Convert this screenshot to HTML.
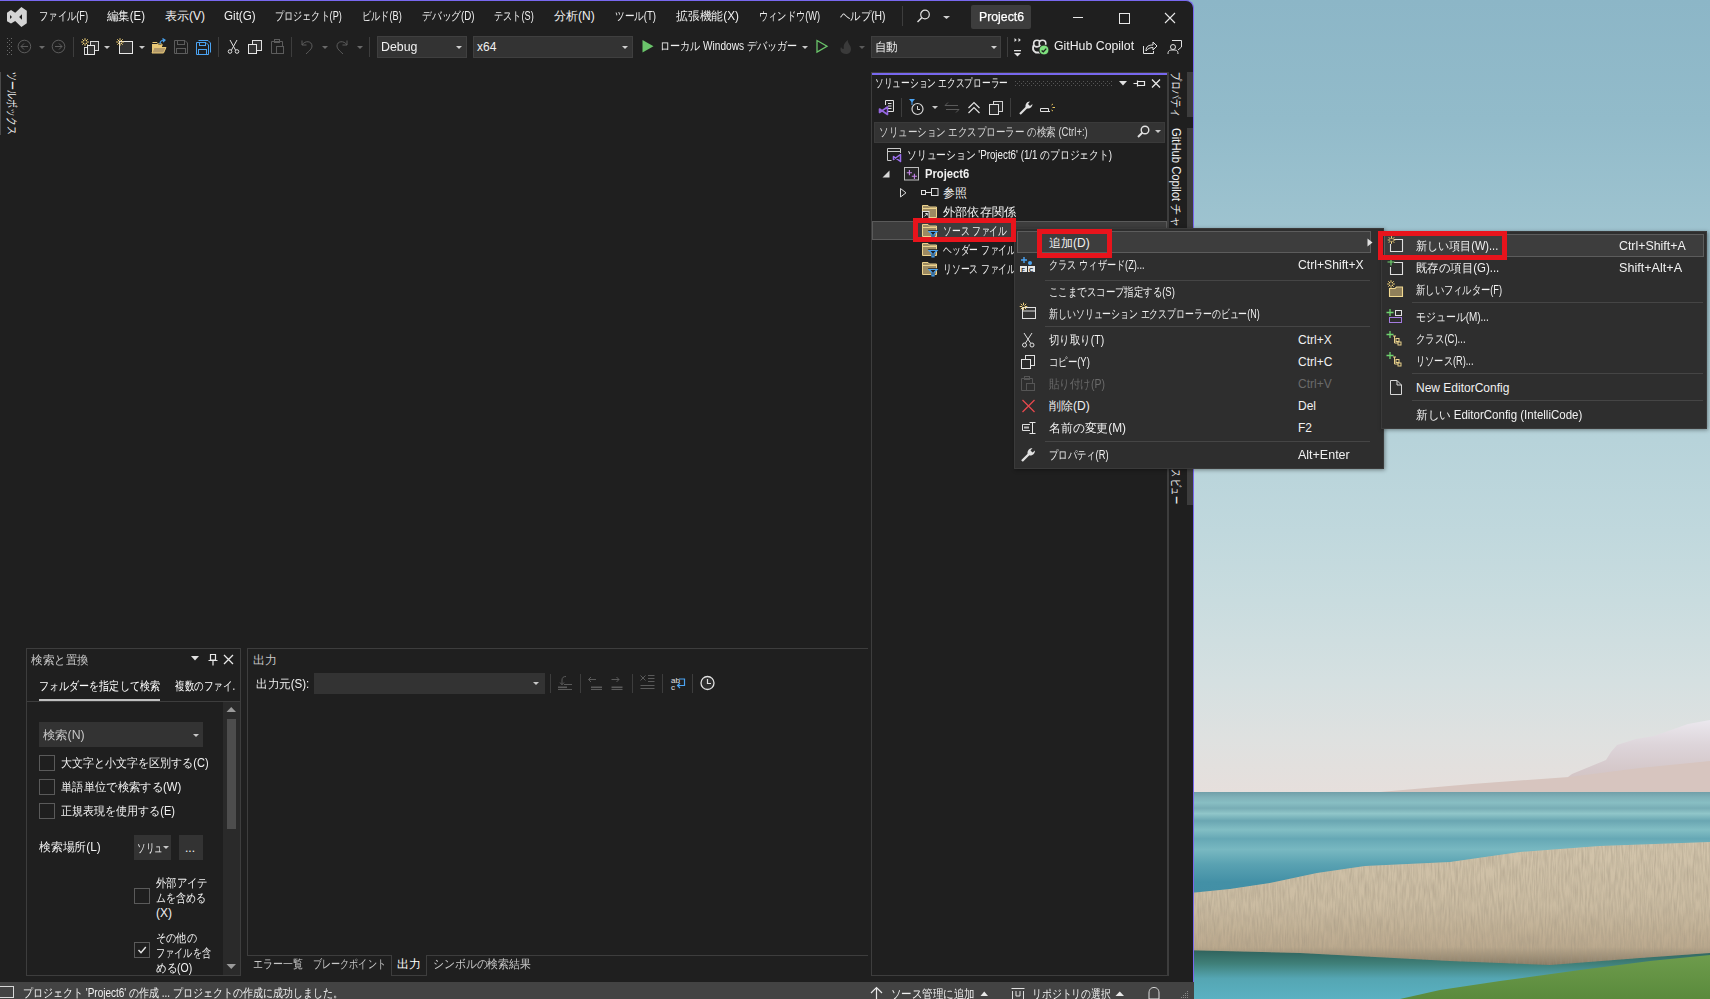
<!DOCTYPE html><html><head><meta charset="utf-8"><style>*{box-sizing:border-box;margin:0;padding:0}
html,body{width:1710px;height:999px;overflow:hidden}
body{position:relative;font-family:"Liberation Sans",sans-serif;font-size:12px;color:#f1f1f1;background:#1f1f1f}
.a{position:absolute}
svg.a{overflow:visible}
.t{position:absolute;white-space:nowrap;line-height:14px;transform-origin:0 0}
</style></head><body>
<svg class="a" style="left:1180px;top:0" width="530" height="999" viewBox="0 0 530 999">
<defs>
<linearGradient id="sky" x1="0" y1="0" x2="0" y2="792" gradientUnits="userSpaceOnUse">
<stop offset="0" stop-color="#8cb6c7"/><stop offset="0.15" stop-color="#92bbca"/><stop offset="0.3" stop-color="#9fc4d0"/><stop offset="0.45" stop-color="#add0d8"/>
<stop offset="0.556" stop-color="#b7d3da"/><stop offset="0.67" stop-color="#c0d8dd"/><stop offset="0.758" stop-color="#c9dcdf"/><stop offset="0.859" stop-color="#d5e0e1"/><stop offset="0.934" stop-color="#dfe1e0"/><stop offset="1" stop-color="#e6dfdc"/></linearGradient>
<linearGradient id="wat" x1="0" y1="792" x2="0" y2="972" gradientUnits="userSpaceOnUse">
<stop offset="0" stop-color="#709fa8"/><stop offset="0.03" stop-color="#80b2b9"/><stop offset="0.06" stop-color="#88bec3"/>
<stop offset="0.09" stop-color="#78adb5"/><stop offset="0.12" stop-color="#90c6c9"/><stop offset="0.16" stop-color="#6aa6b2"/>
<stop offset="0.21" stop-color="#82bec4"/><stop offset="0.26" stop-color="#66a8b5"/><stop offset="0.32" stop-color="#78b8c1"/>
<stop offset="0.4" stop-color="#5aa2b2"/><stop offset="0.5" stop-color="#4390a6"/><stop offset="1" stop-color="#3f8aa0"/></linearGradient>
<linearGradient id="gr" x1="0" y1="845" x2="0" y2="965" gradientUnits="userSpaceOnUse">
<stop offset="0" stop-color="#d2c4ab"/><stop offset="0.5" stop-color="#cbbca2"/><stop offset="0.85" stop-color="#bba98e"/><stop offset="1" stop-color="#8a7c66"/></linearGradient>
<linearGradient id="wat2" x1="0" y1="948" x2="0" y2="999" gradientUnits="userSpaceOnUse">
<stop offset="0" stop-color="#2d5e58"/><stop offset="0.3" stop-color="#3f7f78"/><stop offset="0.6" stop-color="#55a6b3"/><stop offset="1" stop-color="#5ab1c2"/></linearGradient>
<linearGradient id="mt" x1="0" y1="720" x2="0" y2="790" gradientUnits="userSpaceOnUse">
<stop offset="0" stop-color="#ebe8ee"/><stop offset="0.35" stop-color="#ddd5da"/><stop offset="0.7" stop-color="#d5c8ca"/><stop offset="1" stop-color="#d3c2bf"/></linearGradient>
<linearGradient id="gg" x1="0" y1="955" x2="0" y2="999" gradientUnits="userSpaceOnUse">
<stop offset="0" stop-color="#6e9c4c"/><stop offset="1" stop-color="#5a8a3c"/></linearGradient>
<filter id="grt" x="0" y="0" width="100%" height="100%"><feTurbulence type="fractalNoise" baseFrequency="0.55 0.06" numOctaves="2" seed="3"/><feColorMatrix type="matrix" values="0 0 0 0 0.35  0 0 0 0 0.3  0 0 0 0 0.22  0 0 0 -1.6 1.05"/></filter>
<clipPath id="grc"><polygon points="0,894 50,889 90,883 137,873 185,866 270,862 340,852 420,846 530,842 530,953 460,958 370,965 270,961 120,953 0,950"/></clipPath>
</defs>
<rect x="0" y="0" width="530" height="999" fill="url(#sky)"/>
<polygon fill="url(#mt)" points="388,777 392,774 409,767 426,760 431,752 437,745 456,739 474,736 508,724 530,720 530,792 388,792"/>
<polygon fill="#d7c5bf" points="200,792 292,784 389,777 460,768 530,761 530,793 200,793"/>
<rect x="0" y="792" width="530" height="180" fill="url(#wat)"/>
<rect x="0" y="948" width="530" height="51" fill="url(#wat2)"/>
<polygon fill="url(#gr)" points="0,894 50,889 90,883 137,873 185,866 270,862 340,852 420,846 530,842 530,953 460,958 370,965 270,961 120,953 0,950"/>
<g clip-path="url(#grc)"><rect x="0" y="835" width="530" height="135" filter="url(#grt)" opacity="0.55"/></g>
<polygon fill="url(#gg)" points="220,999 260,990 320,981 400,970 470,961 530,955 530,999"/>
</svg>
<div class="a" style="left:0px;top:0px;width:1194px;height:999px;background:#1f1f1f;border:1px solid #7868ef;border-bottom:none;border-left:none;border-radius:0 8px 0 0;"></div>
<svg class="a" style="left:0px;top:0px;" width="34" height="32" viewBox="0 0 34 32"><polygon fill="#d4d4d4" points="7,12.8 11,10 15.2,12.8 21.4,7 26.8,10.7 26.8,23.2 21.4,26.9 15.2,20.9 11,23.6 7,21.2"/><polygon fill="#1f1f1f" points="10,14.9 12,17 10,19.1"/><polygon fill="#1f1f1f" points="22,14.3 22,19.7 19.1,17"/></svg>
<div class="t" id="t0" style="left:39px;top:9px;transform:scaleX(0.7742);">ファイル(F)</div>
<div class="t" id="t1" style="left:107px;top:9px;transform:scaleX(0.9487);">編集(E)</div>
<div class="t" id="t2" style="left:165px;top:9px;">表示(V)</div>
<div class="t" id="t3" style="left:224px;top:9px;transform:scaleX(0.9688);">Git(G)</div>
<div class="t" id="t4" style="left:275px;top:9px;transform:scaleX(0.7586);">プロジェクト(P)</div>
<div class="t" id="t5" style="left:362px;top:9px;transform:scaleX(0.7647);">ビルド(B)</div>
<div class="t" id="t6" style="left:422px;top:9px;transform:scaleX(0.8125);">デバッグ(D)</div>
<div class="t" id="t7" style="left:494px;top:9px;transform:scaleX(0.7647);">テスト(S)</div>
<div class="t" id="t8" style="left:554px;top:9px;">分析(N)</div>
<div class="t" id="t9" style="left:615px;top:9px;transform:scaleX(0.8000);">ツール(T)</div>
<div class="t" id="t10" style="left:676px;top:9px;transform:scaleX(0.9841);">拡張機能(X)</div>
<div class="t" id="t11" style="left:759px;top:9px;transform:scaleX(0.7692);">ウィンドウ(W)</div>
<div class="t" id="t12" style="left:840px;top:9px;transform:scaleX(0.8654);">ヘルプ(H)</div>
<div class="a" style="left:902px;top:6px;width:1px;height:20px;background:#3d3d3d;"></div>
<svg class="a" style="left:915px;top:8px;" width="18" height="16" viewBox="0 0 18 16"><circle cx="10" cy="6.5" r="4.3" fill="none" stroke="#e0e0e0" stroke-width="1.2"/><line x1="7" y1="9.5" x2="2.5" y2="14" stroke="#e0e0e0" stroke-width="1.4"/></svg>
<svg class="a" style="left:943px;top:16px;" width="8" height="4" viewBox="0 0 8 4"><polygon points="0,0 7,0 3.5,3" fill="#d0d0d0"/></svg>
<div class="a" style="left:971px;top:5px;width:60px;height:24px;background:#3d3d3d;border-radius:2px;"></div>
<div class="t" id="t13" style="left:979px;top:10px;color:#ffffff;transform:scaleX(1.0233);-webkit-text-stroke:0.25px #ffffff;">Project6</div>
<div class="a" style="left:1073px;top:17px;width:10px;height:1px;background:#e8e8e8;"></div>
<div class="a" style="left:1119px;top:13px;width:11px;height:11px;border:1px solid #e8e8e8;"></div>
<svg class="a" style="left:1164px;top:12px;" width="12" height="12" viewBox="0 0 12 12"><path d="M1,1 L11,11 M11,1 L1,11" stroke="#e8e8e8" stroke-width="1.1"/></svg>
<svg class="a" style="left:0px;top:0px;" width="14" height="60" viewBox="0 0 14 60"><rect x="7" y="38" width="1" height="1" fill="#6a6a6a"/><rect x="11" y="38" width="1" height="1" fill="#6a6a6a"/><rect x="9" y="40" width="1" height="1" fill="#6a6a6a"/><rect x="7" y="42" width="1" height="1" fill="#6a6a6a"/><rect x="11" y="42" width="1" height="1" fill="#6a6a6a"/><rect x="9" y="44" width="1" height="1" fill="#6a6a6a"/><rect x="7" y="46" width="1" height="1" fill="#6a6a6a"/><rect x="11" y="46" width="1" height="1" fill="#6a6a6a"/><rect x="9" y="48" width="1" height="1" fill="#6a6a6a"/><rect x="7" y="50" width="1" height="1" fill="#6a6a6a"/><rect x="11" y="50" width="1" height="1" fill="#6a6a6a"/><rect x="9" y="52" width="1" height="1" fill="#6a6a6a"/><rect x="7" y="54" width="1" height="1" fill="#6a6a6a"/><rect x="11" y="54" width="1" height="1" fill="#6a6a6a"/></svg>
<svg class="a" style="left:17px;top:39px;" width="15" height="15" viewBox="0 0 15 15"><circle cx="7.4" cy="7.5" r="6.3" fill="none" stroke="#5c5c5c" stroke-width="1"/><path d="M4,7.5 H11 M4,7.5 L7,4.5 M4,7.5 L7,10.5" stroke="#5c5c5c" fill="none"/></svg>
<svg class="a" style="left:39px;top:46px;" width="7" height="4" viewBox="0 0 7 4"><polygon points="0,0 6,0 3,3" fill="#6a6a6a"/></svg>
<svg class="a" style="left:51px;top:39px;" width="15" height="15" viewBox="0 0 15 15"><circle cx="7.5" cy="7.5" r="6.3" fill="none" stroke="#5c5c5c" stroke-width="1"/><path d="M4,7.5 H11 M11,7.5 L8,4.5 M11,7.5 L8,10.5" stroke="#5c5c5c" fill="none"/></svg>
<div class="a" style="left:73px;top:37px;width:1px;height:20px;background:#3d3d3d;"></div>
<svg class="a" style="left:80px;top:37px;" width="20" height="20" viewBox="0 0 20 20"><rect x="10.5" y="4.5" width="8" height="9" fill="#333" stroke="#d8d8d8"/><rect x="4.5" y="10.5" width="3" height="7" fill="none" stroke="#d8d8d8"/><rect x="7.5" y="8.5" width="7" height="9" fill="#333" stroke="#e8e8e8"/><g stroke="#f2d27a" stroke-width="1"><line x1="6.30" y1="5.00" x2="8.80" y2="5.00"/><line x1="5.92" y1="5.92" x2="7.69" y2="7.69"/><line x1="5.00" y1="6.30" x2="5.00" y2="8.80"/><line x1="4.08" y1="5.92" x2="2.31" y2="7.69"/><line x1="3.70" y1="5.00" x2="1.20" y2="5.00"/><line x1="4.08" y1="4.08" x2="2.31" y2="2.31"/><line x1="5.00" y1="3.70" x2="5.00" y2="1.20"/><line x1="5.92" y1="4.08" x2="7.69" y2="2.31"/></g></svg>
<svg class="a" style="left:104px;top:46px;" width="7" height="4" viewBox="0 0 7 4"><polygon points="0,0 6,0 3,3" fill="#c8c8c8"/></svg>
<svg class="a" style="left:115px;top:37px;" width="20" height="20" viewBox="0 0 20 20"><rect x="4.5" y="4.5" width="13" height="12" fill="#333" stroke="#e8e8e8"/><g stroke="#f2d27a" stroke-width="1"><line x1="6.30" y1="5.00" x2="8.80" y2="5.00"/><line x1="5.92" y1="5.92" x2="7.69" y2="7.69"/><line x1="5.00" y1="6.30" x2="5.00" y2="8.80"/><line x1="4.08" y1="5.92" x2="2.31" y2="7.69"/><line x1="3.70" y1="5.00" x2="1.20" y2="5.00"/><line x1="4.08" y1="4.08" x2="2.31" y2="2.31"/><line x1="5.00" y1="3.70" x2="5.00" y2="1.20"/><line x1="5.92" y1="4.08" x2="7.69" y2="2.31"/></g></svg>
<svg class="a" style="left:139px;top:46px;" width="7" height="4" viewBox="0 0 7 4"><polygon points="0,0 6,0 3,3" fill="#c8c8c8"/></svg>
<svg class="a" style="left:150px;top:37px;" width="18" height="18" viewBox="0 0 18 18"><path d="M2.5,5.5 H7 L8.5,7 H12 V9" fill="none" stroke="#e8c877"/><path d="M2,7 H8 L9,8 H12 V15.5 H2 Z" fill="#e8c877"/><path d="M4,10.5 H16 L13.5,16 H2 Z" fill="#b39a6a" stroke="#e8c877"/><path d="M10,7 C10,4 12,3 14.5,3 M12.5,1.5 L15,3 L13,5" fill="none" stroke="#4aa3f0" stroke-width="1.2"/></svg>
<svg class="a" style="left:173px;top:39px;" width="16" height="16" viewBox="0 0 16 16"><path d="M1.5,1.5 H12 L14.5,4 V14.5 H1.5 Z" fill="none" stroke="#5c5c5c"/><rect x="4.5" y="1.5" width="7" height="4" fill="none" stroke="#5c5c5c"/><rect x="3.5" y="9.5" width="9" height="5" fill="none" stroke="#5c5c5c"/></svg>
<svg class="a" style="left:195px;top:39px;" width="16" height="16" viewBox="0 0 16 16"><path d="M1.5,3.5 H11 L13.5,6 V15.5 H1.5 Z" fill="none" stroke="#4ba3f2"/><path d="M3.5,1.5 H13 L15.5,4 V13.5" fill="none" stroke="#4ba3f2"/><rect x="4.5" y="3.5" width="6" height="3" fill="none" stroke="#4ba3f2"/><rect x="3.5" y="10.5" width="8" height="5" fill="none" stroke="#4ba3f2"/></svg>
<div class="a" style="left:218px;top:37px;width:1px;height:20px;background:#3d3d3d;"></div>
<svg class="a" style="left:227px;top:39px;" width="13" height="16" viewBox="0 0 13 16"><path d="M3,1 L8.5,11 M10,1 L4.5,11" stroke="#e0e0e0" fill="none"/><circle cx="3" cy="12.5" r="1.8" fill="none" stroke="#e0e0e0"/><circle cx="10" cy="12.5" r="1.8" fill="none" stroke="#e0e0e0"/></svg>
<svg class="a" style="left:247px;top:39px;" width="16" height="16" viewBox="0 0 16 16"><rect x="5.5" y="1.5" width="9" height="10" fill="#333" stroke="#e0e0e0"/><rect x="1.5" y="5.5" width="8" height="9" fill="#333" stroke="#e8e8e8"/></svg>
<svg class="a" style="left:270px;top:38px;" width="16" height="17" viewBox="0 0 16 17"><path d="M1.5,3.5 H12.5 V9 M1.5,3.5 V15.5 H6" fill="none" stroke="#5c5c5c"/><rect x="4.5" y="1.5" width="5" height="3" fill="none" stroke="#5c5c5c"/><rect x="6.5" y="8.5" width="7" height="7" fill="none" stroke="#5c5c5c"/></svg>
<div class="a" style="left:291px;top:37px;width:1px;height:20px;background:#3d3d3d;"></div>
<svg class="a" style="left:299px;top:39px;" width="16" height="16" viewBox="0 0 16 16"><path d="M3,6 C6,1 13,2 13,7 C13,10 10,12 7,15 M3,1.5 V6 H7.5" fill="none" stroke="#5c5c5c"/></svg>
<svg class="a" style="left:322px;top:46px;" width="7" height="4" viewBox="0 0 7 4"><polygon points="0,0 6,0 3,3" fill="#6a6a6a"/></svg>
<svg class="a" style="left:334px;top:39px;" width="16" height="16" viewBox="0 0 16 16"><path d="M13,6 C10,1 3,2 3,7 C3,10 6,12 9,15 M13,1.5 V6 H8.5" fill="none" stroke="#5c5c5c"/></svg>
<svg class="a" style="left:357px;top:46px;" width="7" height="4" viewBox="0 0 7 4"><polygon points="0,0 6,0 3,3" fill="#6a6a6a"/></svg>
<div class="a" style="left:369px;top:37px;width:1px;height:20px;background:#3d3d3d;"></div>
<div class="a" style="left:377px;top:36px;width:90px;height:22px;background:#333333;border:1px solid #3f3f3f;"></div>
<div class="t" id="t14" style="left:381px;top:40px;transform:scaleX(1.0294);">Debug</div>
<svg class="a" style="left:456px;top:46px;" width="7" height="4" viewBox="0 0 7 4"><polygon points="0,0 6,0 3,3" fill="#d0d0d0"/></svg>
<div class="a" style="left:473px;top:36px;width:160px;height:22px;background:#333333;border:1px solid #3f3f3f;"></div>
<div class="t" id="t15" style="left:477px;top:40px;">x64</div>
<svg class="a" style="left:622px;top:46px;" width="7" height="4" viewBox="0 0 7 4"><polygon points="0,0 6,0 3,3" fill="#d0d0d0"/></svg>
<svg class="a" style="left:641px;top:39px;" width="14" height="15" viewBox="0 0 14 15"><polygon points="1.5,1 12.5,7.2 1.5,13.5" fill="#6ac46a"/></svg>
<div class="t" id="t16" style="left:660px;top:39px;transform:scaleX(0.8395);">ローカル Windows デバッガー</div>
<svg class="a" style="left:802px;top:46px;" width="7" height="4" viewBox="0 0 7 4"><polygon points="0,0 6,0 3,3" fill="#c8c8c8"/></svg>
<svg class="a" style="left:815px;top:39px;" width="14" height="15" viewBox="0 0 14 15"><polygon points="2,1.5 12,7.2 2,13" fill="none" stroke="#6ac46a" stroke-width="1.3"/></svg>
<svg class="a" style="left:838px;top:39px;" width="16" height="16" viewBox="0 0 16 16"><path d="M8,15 C3,15 1.5,11 3,8 C4,10 5,10 6,9.5 C5,6 7,3 10,1 C9,4 13,6 13,10 C13,13 11,15 8,15 Z" fill="#3a3a3a"/></svg>
<svg class="a" style="left:859px;top:46px;" width="7" height="4" viewBox="0 0 7 4"><polygon points="0,0 6,0 3,3" fill="#5a5a5a"/></svg>
<div class="a" style="left:871px;top:36px;width:130px;height:22px;background:#333333;border:1px solid #3f3f3f;"></div>
<div class="t" id="t17" style="left:875px;top:40px;transform:scaleX(0.9565);">自動</div>
<svg class="a" style="left:991px;top:46px;" width="7" height="4" viewBox="0 0 7 4"><polygon points="0,0 6,0 3,3" fill="#d0d0d0"/></svg>
<div class="a" style="left:1007px;top:37px;width:1px;height:20px;background:#3d3d3d;"></div>
<svg class="a" style="left:1012px;top:37px;" width="12" height="20" viewBox="0 0 12 20"><path d="M2.5,1 L4.8,3 L2.5,5 Z M6.5,1 L8.8,3 L6.5,5 Z" fill="#e0e0e0"/><rect x="2" y="13" width="7" height="1.3" fill="#e0e0e0"/><polygon points="2,16 9,16 5.5,19.5" fill="#e0e0e0"/></svg>
<svg class="a" style="left:1031px;top:38px;" width="19" height="18" viewBox="0 0 19 18"><path d="M2.8,7 C1.5,10 1.8,13 5,14.5 H9" fill="none" stroke="#e0e0e0" stroke-width="2"/><circle cx="6" cy="5.6" r="3.3" fill="#1f1f1f" stroke="#e0e0e0" stroke-width="1.6"/><circle cx="11.5" cy="5.6" r="3.3" fill="#1f1f1f" stroke="#e0e0e0" stroke-width="1.6"/><circle cx="13" cy="12" r="5" fill="#7ee07e" stroke="#1f1f1f" stroke-width="1"/><path d="M10.6,12.4 L12.3,13.8 L15.3,10.6" stroke="#1f1f1f" fill="none" stroke-width="1.3"/></svg>
<div class="t" id="t18" style="left:1054px;top:39px;transform:scaleX(1.0260);">GitHub Copilot</div>
<svg class="a" style="left:1142px;top:40px;" width="16" height="15" viewBox="0 0 16 15"><path d="M1.5,6 V13.5 H11.5 V11" fill="none" stroke="#e0e0e0"/><path d="M4,11 C4,6 7,5 11,5 V2 L15,6 L11,10 V7.5 C8,7.5 6,8.5 4,11 Z" fill="none" stroke="#e0e0e0"/></svg>
<svg class="a" style="left:1167px;top:39px;" width="16" height="16" viewBox="0 0 16 16"><path d="M5,1.5 H14.5 V8 L11,11" fill="none" stroke="#e0e0e0"/><circle cx="6" cy="8" r="2.5" fill="none" stroke="#e0e0e0"/><path d="M1,15 C1,11 3,11 6,11 C9,11 11,11 11,15" fill="none" stroke="#e0e0e0"/></svg>
<div class="a" style="left:0px;top:72px;width:1px;height:63px;background:#4a4a4a;"></div>
<div class="t" id="t19" style="left:19px;top:72px;transform:rotate(90deg) scaleX(0.7470);">ツールボックス</div>
<div class="a" style="left:26px;top:648px;width:215px;height:328px;border:1px solid #3d3d3d;"></div>
<div class="t" id="t20" style="left:31px;top:653px;color:#c8c8c8;transform:scaleX(0.9661);">検索と置換</div>
<svg class="a" style="left:191px;top:656px;" width="9" height="5" viewBox="0 0 9 5"><polygon points="0,0 8,0 4,4.5" fill="#e0e0e0"/></svg>
<svg class="a" style="left:208px;top:653px;" width="10" height="13" viewBox="0 0 10 13"><path d="M2.5,1.5 H7.5 V7 H2.5 Z M0.5,7.5 H9.5 M5,8 V12.5" fill="none" stroke="#e8e8e8" stroke-width="1.2"/></svg>
<svg class="a" style="left:223px;top:654px;" width="12" height="11" viewBox="0 0 12 11"><path d="M1,1 L10,10 M10,1 L1,10" stroke="#e8e8e8" stroke-width="1.3"/></svg>
<div class="t" id="t21" style="left:39px;top:679px;color:#ffffff;transform:scaleX(0.8392);">フォルダーを指定して検索</div>
<div class="t" id="t22" style="left:175px;top:679px;color:#ffffff;transform:scaleX(0.7973);">複数のファイ.</div>
<div class="a" style="left:39px;top:699px;width:121px;height:2px;background:#c0c0c0;"></div>
<div class="a" style="left:27px;top:701px;width:213px;height:1px;background:#3d3d3d;"></div>
<div class="a" style="left:223px;top:702px;width:17px;height:273px;background:#2a2a2a;"></div>
<svg class="a" style="left:226px;top:706px;" width="11" height="7" viewBox="0 0 11 7"><polygon points="0.5,6 10,6 5.25,1" fill="#9a9a9a"/></svg>
<div class="a" style="left:227px;top:719px;width:9px;height:110px;background:#4d4d4d;"></div>
<svg class="a" style="left:226px;top:963px;" width="11" height="7" viewBox="0 0 11 7"><polygon points="0.5,1 10,1 5.25,6" fill="#9a9a9a"/></svg>
<div class="a" style="left:39px;top:722px;width:164px;height:25px;background:#333333;"></div>
<div class="t" id="t23" style="left:43px;top:728px;color:#c8c8c8;transform:scaleX(1.0250);">検索(N)</div>
<svg class="a" style="left:193px;top:734px;" width="7" height="4" viewBox="0 0 7 4"><polygon points="0,0 6,0 3,3" fill="#c8c8c8"/></svg>
<div class="a" style="left:39px;top:755px;width:16px;height:16px;border:1px solid #5a5a5a;"></div>
<div class="t" id="t24" style="left:61px;top:756px;transform:scaleX(0.9187);">大文字と小文字を区別する(C)</div>
<div class="a" style="left:39px;top:779px;width:16px;height:16px;border:1px solid #5a5a5a;"></div>
<div class="t" id="t25" style="left:61px;top:780px;transform:scaleX(0.9444);">単語単位で検索する(W)</div>
<div class="a" style="left:39px;top:803px;width:16px;height:16px;border:1px solid #5a5a5a;"></div>
<div class="t" id="t26" style="left:61px;top:804px;transform:scaleX(0.9187);">正規表現を使用する(E)</div>
<div class="t" id="t27" style="left:39px;top:840px;transform:scaleX(0.9839);">検索場所(L)</div>
<div class="a" style="left:134px;top:835px;width:37px;height:25px;background:#333333;"></div>
<div class="t" id="t28" style="left:137px;top:841px;transform:scaleX(0.7143);">ソリュ</div>
<svg class="a" style="left:163px;top:846px;" width="7" height="4" viewBox="0 0 7 4"><polygon points="0,0 6,0 3,3" fill="#c8c8c8"/></svg>
<div class="a" style="left:179px;top:835px;width:24px;height:25px;background:#333333;"></div>
<div class="t" id="t29" style="left:185px;top:841px;">...</div>
<div class="a" style="left:134px;top:888px;width:16px;height:16px;border:1px solid #5a5a5a;"></div>
<div class="t" id="t30" style="left:156px;top:876px;transform:scaleX(0.8644);">外部アイテ</div>
<div class="t" id="t31" style="left:156px;top:891px;transform:scaleX(0.8305);">ムを含める</div>
<div class="t" id="t32" style="left:156px;top:906px;">(X)</div>
<div class="a" style="left:134px;top:942px;width:16px;height:16px;border:1px solid #5a5a5a;"></div>
<svg class="a" style="left:136px;top:944px;" width="12" height="12" viewBox="0 0 12 12"><path d="M2.5,6 L5,8.7 L9.8,3" fill="none" stroke="#e8e8e8" stroke-width="1.4"/></svg>
<div class="t" id="t33" style="left:156px;top:931px;transform:scaleX(0.8511);">その他の</div>
<div class="t" id="t34" style="left:156px;top:946px;transform:scaleX(0.7606);">ファイルを含</div>
<div class="t" id="t35" style="left:156px;top:961px;transform:scaleX(0.8750);">める(O)</div>
<div class="a" style="left:247px;top:648px;width:621px;height:1px;background:#3d3d3d;"></div>
<div class="a" style="left:247px;top:648px;width:1px;height:308px;background:#3d3d3d;"></div>
<div class="t" id="t36" style="left:253px;top:653px;color:#c8c8c8;">出力</div>
<div class="t" id="t37" style="left:256px;top:677px;transform:scaleX(0.9630);">出力元(S):</div>
<div class="a" style="left:314px;top:673px;width:231px;height:21px;background:#333333;"></div>
<svg class="a" style="left:533px;top:682px;" width="7" height="4" viewBox="0 0 7 4"><polygon points="0,0 6,0 3,3" fill="#c8c8c8"/></svg>
<div class="a" style="left:550px;top:674px;width:1px;height:19px;background:#3d3d3d;"></div>
<div class="a" style="left:580px;top:674px;width:1px;height:19px;background:#3d3d3d;"></div>
<div class="a" style="left:632px;top:674px;width:1px;height:19px;background:#3d3d3d;"></div>
<div class="a" style="left:662px;top:674px;width:1px;height:19px;background:#3d3d3d;"></div>
<div class="a" style="left:692px;top:674px;width:1px;height:19px;background:#3d3d3d;"></div>
<svg class="a" style="left:557px;top:674px;" width="17" height="18" viewBox="0 0 17 18"><path d="M9,2.5 C6.5,2.5 5,3.5 5,6 V10.5 M3,8.5 L5,10.8 L7,8.5" fill="none" stroke="#5a5a5a"/><path d="M7,10.5 H15 M1,15.5 H15" stroke="#5a5a5a"/><rect x="1" y="12.5" width="9" height="1.6" fill="#5a5a5a"/></svg>
<svg class="a" style="left:587px;top:674px;" width="17" height="18" viewBox="0 0 17 18"><path d="M1.5,5.5 H9 M1.5,5.5 L4,3 M1.5,5.5 L4,8 M4,15.5 H15" fill="none" stroke="#5a5a5a"/><rect x="4" y="12.5" width="11" height="1.6" fill="#5a5a5a"/></svg>
<svg class="a" style="left:609px;top:674px;" width="17" height="18" viewBox="0 0 17 18"><path d="M2.5,5.5 H10 M10,5.5 L7.5,3 M10,5.5 L7.5,8 M2.5,15.5 H13.5" fill="none" stroke="#5a5a5a"/><rect x="2.5" y="12.5" width="11" height="1.6" fill="#5a5a5a"/></svg>
<svg class="a" style="left:639px;top:674px;" width="17" height="18" viewBox="0 0 17 18"><path d="M1.5,1.5 L6.5,6.5 M6.5,1.5 L1.5,6.5 M9,1.5 H15.5 M9,4.5 H15.5 M9,7.5 H15.5 M1.5,11.5 H15.5 M1.5,14.5 H15.5" fill="none" stroke="#5a5a5a"/></svg>
<svg class="a" style="left:669px;top:674px;" width="18" height="18" viewBox="0 0 18 18"><text x="2" y="8.5" font-size="8" fill="#e0e0e0" font-family="Liberation Sans">ab</text><text x="2" y="16" font-size="8" fill="#e0e0e0" font-family="Liberation Sans">c</text><path d="M10,5 H15.5 V11.5 H8.5 M11,9 L8.5,11.5 L11,14" fill="none" stroke="#4ba3f2" stroke-width="1.2"/></svg>
<svg class="a" style="left:699px;top:674px;" width="18" height="18" viewBox="0 0 18 18"><circle cx="8.5" cy="9" r="6.5" fill="#2e2e2e" stroke="#e0e0e0" stroke-width="1.3"/><path d="M8.5,5 V9.5 H12" fill="none" stroke="#e0e0e0" stroke-width="1.2"/></svg>
<div class="a" style="left:248px;top:955px;width:143px;height:1px;background:#3d3d3d;"></div>
<div class="a" style="left:427px;top:955px;width:441px;height:1px;background:#3d3d3d;"></div>
<div class="t" id="t38" style="left:253px;top:957px;color:#c8c8c8;transform:scaleX(0.8305);">エラー一覧</div>
<div class="t" id="t39" style="left:313px;top:957px;color:#c8c8c8;transform:scaleX(0.7579);">ブレークポイント</div>
<div class="a" style="left:391px;top:955px;width:36px;height:21px;background:#1f1f1f;border:1px solid #3d3d3d;border-top:none;"></div>
<div class="t" id="t40" style="left:397px;top:957px;color:#ffffff;">出力</div>
<div class="t" id="t41" style="left:433px;top:957px;color:#c8c8c8;transform:scaleX(0.9065);">シンボルの検索結果</div>
<div class="a" style="left:0px;top:982px;width:1194px;height:17px;background:#434343;"></div>
<svg class="a" style="left:0px;top:985px;" width="16" height="14" viewBox="0 0 16 14"><rect x="-2.5" y="1.5" width="16" height="11" fill="none" stroke="#d8d8d8"/></svg>
<div class="t" id="t42" style="left:23px;top:986px;transform:scaleX(0.8329);">プロジェクト 'Project6' の作成 ... プロジェクトの作成に成功しました。</div>
<svg class="a" style="left:869px;top:986px;" width="15" height="14" viewBox="0 0 15 14"><path d="M7.5,1.5 V14 M2,7 L7.5,1.5 L13,7" fill="none" stroke="#e8e8e8" stroke-width="1.2"/></svg>
<div class="t" id="t43" style="left:891px;top:987px;transform:scaleX(0.8737);">ソース管理に追加</div>
<svg class="a" style="left:980px;top:991px;" width="9" height="6" viewBox="0 0 9 6"><polygon points="0.5,5 8,5 4.25,0.5" fill="#e8e8e8"/></svg>
<svg class="a" style="left:1010px;top:987px;" width="16" height="13" viewBox="0 0 16 13"><path d="M1.5,1.5 H14.5 M2.5,4 V13 M13.5,4 V13 M6,4 V9 H10 V4" fill="none" stroke="#e0e0e0"/></svg>
<div class="t" id="t44" style="left:1032px;top:987px;transform:scaleX(0.8211);">リポジトリの選択</div>
<svg class="a" style="left:1115px;top:991px;" width="10" height="6" viewBox="0 0 10 6"><polygon points="0.5,5 9,5 4.75,0.5" fill="#e8e8e8"/></svg>
<svg class="a" style="left:1146px;top:986px;" width="16" height="14" viewBox="0 0 16 14"><path d="M3,13 V7 C3,3 5.5,1.5 8,1.5 C10.5,1.5 13,3 13,7 V13 Z" fill="none" stroke="#e0e0e0"/></svg>
<svg class="a" style="left:1180px;top:990px;" width="10" height="9" viewBox="0 0 10 9"><g fill="#8a8a8a"><rect x="7" y="1" width="1" height="1"/><rect x="5" y="3" width="1" height="1"/><rect x="7" y="3" width="1" height="1"/><rect x="3" y="5" width="1" height="1"/><rect x="5" y="5" width="1" height="1"/><rect x="7" y="5" width="1" height="1"/><rect x="1" y="7" width="1" height="1"/><rect x="3" y="7" width="1" height="1"/><rect x="5" y="7" width="1" height="1"/><rect x="7" y="7" width="1" height="1"/></g></svg>
<div class="a" style="left:871px;top:72px;width:298px;height:904px;border:1px solid #3d3d3d;"></div>
<div class="a" style="left:872px;top:73px;width:296px;height:2px;background:#7868ef;"></div>
<div class="t" id="t45" style="left:875px;top:76px;transform:scaleX(0.7253);">ソリューション エクスプローラー</div>
<svg class="a" style="left:1015px;top:81px;" width="98" height="6" viewBox="0 0 98 6"><rect x="0" y="0" width="1" height="1" fill="#555"/><rect x="4" y="0" width="1" height="1" fill="#555"/><rect x="8" y="0" width="1" height="1" fill="#555"/><rect x="12" y="0" width="1" height="1" fill="#555"/><rect x="16" y="0" width="1" height="1" fill="#555"/><rect x="20" y="0" width="1" height="1" fill="#555"/><rect x="24" y="0" width="1" height="1" fill="#555"/><rect x="28" y="0" width="1" height="1" fill="#555"/><rect x="32" y="0" width="1" height="1" fill="#555"/><rect x="36" y="0" width="1" height="1" fill="#555"/><rect x="40" y="0" width="1" height="1" fill="#555"/><rect x="44" y="0" width="1" height="1" fill="#555"/><rect x="48" y="0" width="1" height="1" fill="#555"/><rect x="52" y="0" width="1" height="1" fill="#555"/><rect x="56" y="0" width="1" height="1" fill="#555"/><rect x="60" y="0" width="1" height="1" fill="#555"/><rect x="64" y="0" width="1" height="1" fill="#555"/><rect x="68" y="0" width="1" height="1" fill="#555"/><rect x="72" y="0" width="1" height="1" fill="#555"/><rect x="76" y="0" width="1" height="1" fill="#555"/><rect x="80" y="0" width="1" height="1" fill="#555"/><rect x="84" y="0" width="1" height="1" fill="#555"/><rect x="88" y="0" width="1" height="1" fill="#555"/><rect x="92" y="0" width="1" height="1" fill="#555"/><rect x="96" y="0" width="1" height="1" fill="#555"/><rect x="2" y="2" width="1" height="1" fill="#555"/><rect x="6" y="2" width="1" height="1" fill="#555"/><rect x="10" y="2" width="1" height="1" fill="#555"/><rect x="14" y="2" width="1" height="1" fill="#555"/><rect x="18" y="2" width="1" height="1" fill="#555"/><rect x="22" y="2" width="1" height="1" fill="#555"/><rect x="26" y="2" width="1" height="1" fill="#555"/><rect x="30" y="2" width="1" height="1" fill="#555"/><rect x="34" y="2" width="1" height="1" fill="#555"/><rect x="38" y="2" width="1" height="1" fill="#555"/><rect x="42" y="2" width="1" height="1" fill="#555"/><rect x="46" y="2" width="1" height="1" fill="#555"/><rect x="50" y="2" width="1" height="1" fill="#555"/><rect x="54" y="2" width="1" height="1" fill="#555"/><rect x="58" y="2" width="1" height="1" fill="#555"/><rect x="62" y="2" width="1" height="1" fill="#555"/><rect x="66" y="2" width="1" height="1" fill="#555"/><rect x="70" y="2" width="1" height="1" fill="#555"/><rect x="74" y="2" width="1" height="1" fill="#555"/><rect x="78" y="2" width="1" height="1" fill="#555"/><rect x="82" y="2" width="1" height="1" fill="#555"/><rect x="86" y="2" width="1" height="1" fill="#555"/><rect x="90" y="2" width="1" height="1" fill="#555"/><rect x="94" y="2" width="1" height="1" fill="#555"/><rect x="0" y="4" width="1" height="1" fill="#555"/><rect x="4" y="4" width="1" height="1" fill="#555"/><rect x="8" y="4" width="1" height="1" fill="#555"/><rect x="12" y="4" width="1" height="1" fill="#555"/><rect x="16" y="4" width="1" height="1" fill="#555"/><rect x="20" y="4" width="1" height="1" fill="#555"/><rect x="24" y="4" width="1" height="1" fill="#555"/><rect x="28" y="4" width="1" height="1" fill="#555"/><rect x="32" y="4" width="1" height="1" fill="#555"/><rect x="36" y="4" width="1" height="1" fill="#555"/><rect x="40" y="4" width="1" height="1" fill="#555"/><rect x="44" y="4" width="1" height="1" fill="#555"/><rect x="48" y="4" width="1" height="1" fill="#555"/><rect x="52" y="4" width="1" height="1" fill="#555"/><rect x="56" y="4" width="1" height="1" fill="#555"/><rect x="60" y="4" width="1" height="1" fill="#555"/><rect x="64" y="4" width="1" height="1" fill="#555"/><rect x="68" y="4" width="1" height="1" fill="#555"/><rect x="72" y="4" width="1" height="1" fill="#555"/><rect x="76" y="4" width="1" height="1" fill="#555"/><rect x="80" y="4" width="1" height="1" fill="#555"/><rect x="84" y="4" width="1" height="1" fill="#555"/><rect x="88" y="4" width="1" height="1" fill="#555"/><rect x="92" y="4" width="1" height="1" fill="#555"/><rect x="96" y="4" width="1" height="1" fill="#555"/></svg>
<svg class="a" style="left:1119px;top:81px;" width="9" height="5" viewBox="0 0 9 5"><polygon points="0,0 8,0 4,4.5" fill="#e0e0e0"/></svg>
<svg class="a" style="left:1133px;top:79px;" width="13" height="9" viewBox="0 0 13 9"><path d="M0.5,4.5 H4 M4.5,1.5 V7.5 M4.5,2.5 H11.5 V6.5 H4.5" fill="none" stroke="#e8e8e8" stroke-width="1.2"/></svg>
<svg class="a" style="left:1151px;top:79px;" width="10" height="9" viewBox="0 0 10 9"><path d="M1,0.5 L9,8.5 M9,0.5 L1,8.5" stroke="#e8e8e8" stroke-width="1.3"/></svg>
<svg class="a" style="left:877px;top:99px;" width="19" height="18" viewBox="0 0 19 18"><path d="M8.5,6 V1.5 H16.5 V12.5 H11" fill="#262626" stroke="#e0e0e0"/><path d="M11,4.5 H14.5 M11,7 H14.5 M11,9.5 H14.5" stroke="#e0e0e0"/><path d="M2.5,10 L10.5,15.5 V8 L2.5,13.5 Z" fill="none" stroke="#9466e0" stroke-width="1.6" stroke-linejoin="round"/></svg>
<div class="a" style="left:901px;top:98px;width:1px;height:19px;background:#3d3d3d;"></div>
<svg class="a" style="left:908px;top:98px;" width="18" height="19" viewBox="0 0 18 19"><polygon points="1,1 7,1 4,4.5" fill="#4ba3f2"/><rect x="3.5" y="3" width="1" height="4" fill="#4ba3f2"/><circle cx="9.5" cy="11" r="5.5" fill="none" stroke="#d8d8d8" stroke-width="1.2"/><path d="M9.5,8 V11.5 H12" fill="none" stroke="#d8d8d8"/></svg>
<svg class="a" style="left:932px;top:106px;" width="7" height="4" viewBox="0 0 7 4"><polygon points="0,0 6,0 3,3" fill="#c8c8c8"/></svg>
<svg class="a" style="left:944px;top:100px;" width="16" height="14" viewBox="0 0 16 14"><path d="M1,5.5 H14 M1,5.5 L4,2.5 M2,9.5 H15 M15,9.5 L12,12.5" fill="none" stroke="#5a5a5a"/></svg>
<svg class="a" style="left:967px;top:101px;" width="14" height="14" viewBox="0 0 14 14"><path d="M1.5,7 L7,1.5 L12.5,7 M1.5,12 L7,6.5 L12.5,12" fill="none" stroke="#e0e0e0" stroke-width="1.2"/></svg>
<svg class="a" style="left:988px;top:100px;" width="17" height="16" viewBox="0 0 17 16"><rect x="5.5" y="1.5" width="9" height="10" fill="#2a2a2a" stroke="#d0d0d0"/><rect x="1.5" y="4.5" width="9" height="10" fill="#2a2a2a" stroke="#e0e0e0"/></svg>
<div class="a" style="left:1010px;top:98px;width:1px;height:19px;background:#3d3d3d;"></div>
<svg class="a" style="left:1018px;top:100px;" width="16" height="16" viewBox="0 0 16 16"><path d="M2,14 L8.5,7.5" stroke="#e0e0e0" stroke-width="2.2"/><path d="M8,8 C6.5,5 8.5,1.5 12,1.5 L10,4 L12,6 L14.5,4 C14.5,7.5 11,9.5 8,8 Z" fill="#e0e0e0"/></svg>
<svg class="a" style="left:1039px;top:101px;" width="18" height="12" viewBox="0 0 18 12"><path d="M1.5,10.5 H11 M1.5,10.5 V7.5 H9.5 V10" fill="none" stroke="#e0e0e0"/><path d="M12.5,4 L14,3 M13.5,6.5 H16 M12.5,9 L14,10" stroke="#e8c65f"/></svg>
<div class="a" style="left:874px;top:122px;width:291px;height:21px;background:#333333;border:1px solid #3a3a3a;"></div>
<div class="t" id="t46" style="left:879px;top:125px;color:#d8d8d8;transform:scaleX(0.7939);">ソリューション エクスプローラー の検索 (Ctrl+:)</div>
<svg class="a" style="left:1136px;top:124px;" width="15" height="15" viewBox="0 0 15 15"><circle cx="9" cy="6" r="3.8" fill="none" stroke="#e0e0e0" stroke-width="1.4"/><path d="M6.5,8.5 L2,13" stroke="#e0e0e0" stroke-width="2"/></svg>
<svg class="a" style="left:1155px;top:130px;" width="7" height="4" viewBox="0 0 7 4"><polygon points="0,0 6,0 3,3" fill="#c8c8c8"/></svg>
<svg class="a" style="left:886px;top:147px;" width="17" height="16" viewBox="0 0 17 16"><path d="M5.5,13.5 H1.5 V1.5 H14.5 V6" fill="none" stroke="#c8c8c8"/><path d="M1.5,4.5 H14.5" stroke="#c8c8c8"/><path d="M7.5,9.5 L14.5,14.5 V7.5 L7.5,12.5 Z" fill="none" stroke="#9d6ff0" stroke-width="1.5" stroke-linejoin="round"/></svg>
<div class="t" id="t47" style="left:907px;top:148px;transform:scaleX(0.8160);">ソリューション 'Project6' (1/1 のプロジェクト)</div>
<svg class="a" style="left:881px;top:169px;" width="10" height="10" viewBox="0 0 10 10"><polygon points="8.5,1.5 8.5,8.5 1.5,8.5" fill="#d8d8d8"/></svg>
<svg class="a" style="left:904px;top:167px;" width="16" height="14" viewBox="0 0 16 14"><rect x="0.5" y="0.5" width="14" height="12.5" fill="#262626" stroke="#bdbdbd"/><path d="M2.8,5.7 H8 M5.4,3.1 V8.3 M7.8,9.3 H13 M10.4,6.7 V11.9" stroke="#c586e8" stroke-width="1.1"/></svg>
<div class="t" id="t48" style="left:925px;top:167px;font-weight:bold;transform:scaleX(0.9348);">Project6</div>
<svg class="a" style="left:899px;top:187px;" width="9" height="12" viewBox="0 0 9 12"><polygon points="1.5,1.5 7,5.8 1.5,10" fill="none" stroke="#d8d8d8"/></svg>
<svg class="a" style="left:921px;top:188px;" width="18" height="9" viewBox="0 0 18 9"><rect x="0.5" y="2.5" width="4" height="4" fill="none" stroke="#e0e0e0"/><path d="M4.5,4.5 H10" stroke="#e0e0e0"/><rect x="10.5" y="0.5" width="6.5" height="7" fill="none" stroke="#e0e0e0"/></svg>
<div class="t" id="t49" style="left:943px;top:186px;">参照</div>
<svg class="a" style="left:922px;top:204px;" width="16" height="16" viewBox="0 0 16 16"><path d="M0.5,1.5 H6 L7.5,3 H14.5 V13.5 H0.5 Z" fill="#9c8a62" stroke="#ecd28c"/><path d="M0.5,4.5 H14.5" stroke="#ecd28c"/><rect x="0.5" y="7.5" width="6.5" height="7" fill="#1f1f1f" stroke="#e0e0e0"/><path d="M2.3,12.5 L5.3,9.5 M3.3,9.5 H5.3 V11.5" stroke="#e0e0e0" fill="none"/></svg>
<div class="t" id="t50" style="left:943px;top:205px;transform:scaleX(1.0141);">外部依存関係</div>
<div class="a" style="left:872px;top:221px;width:295px;height:19px;background:#3d3d3d;border:1px solid #5a5a5a;"></div>
<svg class="a" style="left:922px;top:223px;" width="16" height="16" viewBox="0 0 16 16"><path d="M0.5,1.5 H6 L7.5,3 H14.5 V13.5 H0.5 Z" fill="#9c8a62" stroke="#ecd28c"/><path d="M0.5,4.5 H14.5" stroke="#ecd28c"/><path d="M5.8,7.3 H16.2 L12.8,11 V16 H9.2 V11 Z" fill="#1f1f1f" stroke="none"/><path d="M7,8.5 H15 L12,11.5 V14.8 H10 V11.5 Z" fill="none" stroke="#4ba3f2" stroke-width="1.2"/></svg>
<div class="t" id="t51" style="left:943px;top:224px;transform:scaleX(0.7326);">ソース ファイル</div>
<svg class="a" style="left:922px;top:242px;" width="16" height="16" viewBox="0 0 16 16"><path d="M0.5,1.5 H6 L7.5,3 H14.5 V13.5 H0.5 Z" fill="#9c8a62" stroke="#ecd28c"/><path d="M0.5,4.5 H14.5" stroke="#ecd28c"/><path d="M5.8,7.3 H16.2 L12.8,11 V16 H9.2 V11 Z" fill="#1f1f1f" stroke="none"/><path d="M7,8.5 H15 L12,11.5 V14.8 H10 V11.5 Z" fill="none" stroke="#4ba3f2" stroke-width="1.2"/></svg>
<div class="t" id="t52" style="left:943px;top:243px;transform:scaleX(0.7347);">ヘッダー ファイル</div>
<svg class="a" style="left:922px;top:261px;" width="16" height="16" viewBox="0 0 16 16"><path d="M0.5,1.5 H6 L7.5,3 H14.5 V13.5 H0.5 Z" fill="#9c8a62" stroke="#ecd28c"/><path d="M0.5,4.5 H14.5" stroke="#ecd28c"/><path d="M5.8,7.3 H16.2 L12.8,11 V16 H9.2 V11 Z" fill="#1f1f1f" stroke="none"/><path d="M7,8.5 H15 L12,11.5 V14.8 H10 V11.5 Z" fill="none" stroke="#4ba3f2" stroke-width="1.2"/></svg>
<div class="t" id="t53" style="left:943px;top:262px;transform:scaleX(0.7347);">リソース ファイル</div>
<div class="a" style="left:1167px;top:72px;width:1px;height:904px;background:#3d3d3d;"></div>
<div class="a" style="left:1187px;top:72px;width:6px;height:45px;background:#3d3d3d;"></div>
<div class="t" id="t54" style="left:1183px;top:72px;transform:rotate(90deg) scaleX(0.7458);">プロパティ</div>
<div class="a" style="left:1187px;top:128px;width:6px;height:101px;background:#3d3d3d;"></div>
<div class="t" id="t55" style="left:1183px;top:128px;transform:rotate(90deg) scaleX(0.9375);">GitHub Copilot チャット</div>
<div class="a" style="left:1187px;top:240px;width:6px;height:265px;background:#3d3d3d;"></div>
<div class="t" id="t56" style="left:1183px;top:452px;transform:rotate(90deg) scaleX(0.6892);">クラス ビュー</div>
<div class="a" style="left:1014px;top:228px;width:370px;height:241px;background:#2e2e2e;border:1px solid #3a3a3a;box-shadow:1px 1px 4px rgba(0,0,0,0.4);"></div>
<div class="a" style="left:1017px;top:231px;width:354px;height:22px;background:#3d3d3d;border:1px solid #5c5c5c;"></div>
<div class="t" id="t57" style="left:1049px;top:236px;">追加(D)</div>
<svg class="a" style="left:1367px;top:238px;" width="6" height="9" viewBox="0 0 6 9"><polygon points="0.5,0.5 5.5,4.5 0.5,8.5" fill="#e0e0e0"/></svg>
<svg class="a" style="left:1019px;top:256px;" width="17" height="17" viewBox="0 0 17 17"><path d="M5,1 V7 M2,4 H8" stroke="#4ba3f2" stroke-width="1.4"/><circle cx="11" cy="7" r="2" fill="#4ba3f2"/><rect x="1" y="10" width="7" height="6" fill="#e8e8e8"/><rect x="9" y="10" width="7" height="6" fill="#e8e8e8"/><text x="2.2" y="15.5" font-size="6" font-weight="bold" fill="#1f1f1f" font-family="Liberation Sans">F</text><text x="10" y="15.5" font-size="6" font-weight="bold" fill="#1f1f1f" font-family="Liberation Sans">C</text></svg>
<div class="t" id="t58" style="left:1049px;top:258px;transform:scaleX(0.7661);">クラス ウィザード(Z)...</div>
<div class="t" id="t59" style="left:1298px;top:258px;transform:scaleX(1.0156);">Ctrl+Shift+X</div>
<div class="a" style="left:1045px;top:280px;width:325px;height:1px;background:#454545;"></div>
<div class="t" id="t60" style="left:1049px;top:285px;transform:scaleX(0.7862);">ここまでスコープ指定する(S)</div>
<svg class="a" style="left:1019px;top:302px;" width="18" height="18" viewBox="0 0 18 18"><rect x="3.5" y="5.5" width="13" height="11" fill="#333" stroke="#e0e0e0"/><path d="M3.5,9 H16.5" stroke="#e0e0e0"/><g stroke="#f2d27a" stroke-width="1"><line x1="5.80" y1="4.50" x2="8.30" y2="4.50"/><line x1="5.42" y1="5.42" x2="7.19" y2="7.19"/><line x1="4.50" y1="5.80" x2="4.50" y2="8.30"/><line x1="3.58" y1="5.42" x2="1.81" y2="7.19"/><line x1="3.20" y1="4.50" x2="0.70" y2="4.50"/><line x1="3.58" y1="3.58" x2="1.81" y2="1.81"/><line x1="4.50" y1="3.20" x2="4.50" y2="0.70"/><line x1="5.42" y1="3.58" x2="7.19" y2="1.81"/></g></svg>
<div class="t" id="t61" style="left:1049px;top:307px;transform:scaleX(0.7420);">新しいソリューション エクスプローラーのビュー(N)</div>
<div class="a" style="left:1045px;top:326px;width:325px;height:1px;background:#454545;"></div>
<svg class="a" style="left:1021px;top:332px;" width="15" height="16" viewBox="0 0 15 16"><path d="M3,1 L9.5,11 M11,1 L4.5,11" stroke="#e0e0e0" fill="none"/><circle cx="3.5" cy="13" r="2" fill="none" stroke="#e0e0e0"/><circle cx="11" cy="13" r="2" fill="none" stroke="#e0e0e0"/></svg>
<div class="t" id="t62" style="left:1049px;top:333px;transform:scaleX(0.8710);">切り取り(T)</div>
<div class="t" id="t63" style="left:1298px;top:333px;">Ctrl+X</div>
<svg class="a" style="left:1020px;top:354px;" width="17" height="16" viewBox="0 0 17 16"><rect x="5.5" y="1.5" width="9" height="10" fill="#2b2b2b" stroke="#e0e0e0"/><rect x="1.5" y="5.5" width="9" height="9" fill="#2b2b2b" stroke="#e8e8e8"/></svg>
<div class="t" id="t64" style="left:1049px;top:355px;transform:scaleX(0.7843);">コピー(Y)</div>
<div class="t" id="t65" style="left:1298px;top:355px;">Ctrl+C</div>
<svg class="a" style="left:1020px;top:375px;" width="17" height="17" viewBox="0 0 17 17"><path d="M1.5,3.5 H12.5 V9 M1.5,3.5 V15.5 H6" fill="none" stroke="#555"/><rect x="4.5" y="1.5" width="5" height="3" fill="none" stroke="#555"/><rect x="6.5" y="8.5" width="8" height="7" fill="none" stroke="#555"/></svg>
<div class="t" id="t66" style="left:1049px;top:377px;color:#6a6a6a;transform:scaleX(0.8730);">貼り付け(P)</div>
<div class="t" id="t67" style="left:1298px;top:377px;color:#6a6a6a;">Ctrl+V</div>
<svg class="a" style="left:1021px;top:399px;" width="15" height="14" viewBox="0 0 15 14"><path d="M1.5,1 L13.5,13 M13.5,1 L1.5,13" stroke="#e5484d" stroke-width="1.3"/></svg>
<div class="t" id="t68" style="left:1049px;top:399px;">削除(D)</div>
<div class="t" id="t69" style="left:1298px;top:399px;">Del</div>
<svg class="a" style="left:1020px;top:420px;" width="18" height="16" viewBox="0 0 18 16"><path d="M10,4.5 H2.5 V10.5 H10" fill="none" stroke="#e0e0e0"/><rect x="4" y="6.5" width="5" height="2" fill="#bdbdbd"/><path d="M9.5,2.5 H15.5 M12.5,2.5 V13.5 M9.5,13.5 H15.5" fill="none" stroke="#e8e8e8"/></svg>
<div class="t" id="t70" style="left:1049px;top:421px;transform:scaleX(0.9870);">名前の変更(M)</div>
<div class="t" id="t71" style="left:1298px;top:421px;">F2</div>
<div class="a" style="left:1045px;top:441px;width:325px;height:1px;background:#454545;"></div>
<svg class="a" style="left:1020px;top:446px;" width="17" height="17" viewBox="0 0 17 17"><path d="M2,15 L8.5,8.5" stroke="#e0e0e0" stroke-width="2.4"/><path d="M8,9 C6.5,6 8.5,2 12.5,2 L10.5,4.5 L12.5,6.5 L15,4.5 C15,8.5 11,10.5 8,9 Z" fill="#e0e0e0"/></svg>
<div class="t" id="t72" style="left:1049px;top:448px;transform:scaleX(0.7763);">プロパティ(R)</div>
<div class="t" id="t73" style="left:1298px;top:448px;transform:scaleX(1.0408);">Alt+Enter</div>
<div class="a" style="left:1381px;top:231px;width:326px;height:198px;background:#2e2e2e;border:1px solid #3a3a3a;box-shadow:1px 1px 4px rgba(0,0,0,0.4);"></div>
<div class="a" style="left:1384px;top:234px;width:320px;height:23px;background:#3d3d3d;border:1px solid #5c5c5c;"></div>
<svg class="a" style="left:1386px;top:235px;" width="18" height="18" viewBox="0 0 18 18"><rect x="4.5" y="4.5" width="12" height="12" fill="#333" stroke="none"/><path d="M8,4.5 H16.5 V16.5 H4.5 V9" fill="none" stroke="#e0e0e0" stroke-width="1.1"/><g stroke="#f2d27a" stroke-width="1"><line x1="6.80" y1="5.00" x2="9.30" y2="5.00"/><line x1="6.42" y1="5.92" x2="8.19" y2="7.69"/><line x1="5.50" y1="6.30" x2="5.50" y2="8.80"/><line x1="4.58" y1="5.92" x2="2.81" y2="7.69"/><line x1="4.20" y1="5.00" x2="1.70" y2="5.00"/><line x1="4.58" y1="4.08" x2="2.81" y2="2.31"/><line x1="5.50" y1="3.70" x2="5.50" y2="1.20"/><line x1="6.42" y1="4.08" x2="8.19" y2="2.31"/></g></svg>
<div class="t" id="t74" style="left:1416px;top:239px;transform:scaleX(0.9205);">新しい項目(W)...</div>
<div class="t" id="t75" style="left:1619px;top:239px;transform:scaleX(1.0312);">Ctrl+Shift+A</div>
<svg class="a" style="left:1386px;top:258px;" width="18" height="18" viewBox="0 0 18 18"><rect x="4.5" y="4.5" width="12" height="12" fill="#2e2e2e" stroke="none"/><path d="M8,4.5 H16.5 V16.5 H4.5 V9" fill="none" stroke="#e0e0e0" stroke-width="1.1"/><path d="M5,0.5 V7.5 M1.5,4 H8.5" stroke="#6fd36f" stroke-width="1.2"/></svg>
<div class="t" id="t76" style="left:1416px;top:261px;transform:scaleX(0.9535);">既存の項目(G)...</div>
<div class="t" id="t77" style="left:1619px;top:261px;transform:scaleX(1.0508);">Shift+Alt+A</div>
<svg class="a" style="left:1386px;top:279px;" width="18" height="19" viewBox="0 0 18 19"><path d="M3.5,9.5 H9 L10.5,8 H16.5 V17.5 H3.5 Z" fill="#8f7f5a" stroke="#f0d890" stroke-width="1.1"/><g stroke="#f2d27a" stroke-width="1"><line x1="6.30" y1="5.00" x2="8.80" y2="5.00"/><line x1="5.92" y1="5.92" x2="7.69" y2="7.69"/><line x1="5.00" y1="6.30" x2="5.00" y2="8.80"/><line x1="4.08" y1="5.92" x2="2.31" y2="7.69"/><line x1="3.70" y1="5.00" x2="1.20" y2="5.00"/><line x1="4.08" y1="4.08" x2="2.31" y2="2.31"/><line x1="5.00" y1="3.70" x2="5.00" y2="1.20"/><line x1="5.92" y1="4.08" x2="7.69" y2="2.31"/></g></svg>
<div class="t" id="t78" style="left:1416px;top:283px;transform:scaleX(0.7727);">新しいフィルター(F)</div>
<div class="a" style="left:1412px;top:302px;width:291px;height:1px;background:#454545;"></div>
<svg class="a" style="left:1386px;top:308px;" width="18" height="16" viewBox="0 0 18 16"><path d="M4,1 V8 M0.5,4.5 H7.5" stroke="#6fd36f" stroke-width="1.3"/><rect x="9.5" y="2.5" width="6" height="5" fill="none" stroke="#e0e0e0"/><rect x="3.5" y="9.5" width="12" height="5" fill="none" stroke="#a47be0"/></svg>
<div class="t" id="t79" style="left:1416px;top:310px;transform:scaleX(0.8276);">モジュール(M)...</div>
<svg class="a" style="left:1386px;top:330px;" width="18" height="17" viewBox="0 0 18 17"><path d="M4,1 V8 M0.5,4.5 H7.5" stroke="#6fd36f" stroke-width="1.3"/><path d="M7,6 L10,6 M8.5,6 V13 H12" fill="none" stroke="#e8d08a"/><rect x="10" y="8.5" width="3" height="3" fill="none" stroke="#e8d08a"/><rect x="12" y="12" width="3" height="3" fill="none" stroke="#e8d08a"/></svg>
<div class="t" id="t80" style="left:1416px;top:332px;transform:scaleX(0.7903);">クラス(C)...</div>
<svg class="a" style="left:1386px;top:351px;" width="18" height="17" viewBox="0 0 18 17"><path d="M4,1 V8 M0.5,4.5 H7.5" stroke="#6fd36f" stroke-width="1.3"/><path d="M7,6 L10,6 M8.5,6 V13 H12" fill="none" stroke="#e8d08a"/><rect x="10" y="8.5" width="3" height="3" fill="none" stroke="#e8d08a"/><rect x="12" y="12" width="3" height="3" fill="none" stroke="#e8d08a"/></svg>
<div class="t" id="t81" style="left:1416px;top:354px;transform:scaleX(0.7703);">リソース(R)...</div>
<div class="a" style="left:1412px;top:373px;width:291px;height:1px;background:#454545;"></div>
<svg class="a" style="left:1388px;top:379px;" width="16" height="17" viewBox="0 0 16 17"><path d="M2.5,1.5 H9 L13.5,6 V15.5 H2.5 Z M9,1.5 V6 H13.5" fill="none" stroke="#d8d8d8"/></svg>
<div class="t" id="t82" style="left:1416px;top:381px;">New EditorConfig</div>
<div class="a" style="left:1412px;top:400px;width:291px;height:1px;background:#454545;"></div>
<div class="t" id="t83" style="left:1416px;top:408px;transform:scaleX(0.9593);">新しい EditorConfig (IntelliCode)</div>
<div class="a" style="left:913px;top:218px;width:103px;height:24px;border:1px solid #e8141c;border-width:5px;"></div>
<div class="a" style="left:1037px;top:229px;width:75px;height:29px;border:1px solid #e8141c;border-width:5px;"></div>
<div class="a" style="left:1378px;top:231px;width:129px;height:29px;border:1px solid #e8141c;border-width:5px;"></div>
</body></html>
